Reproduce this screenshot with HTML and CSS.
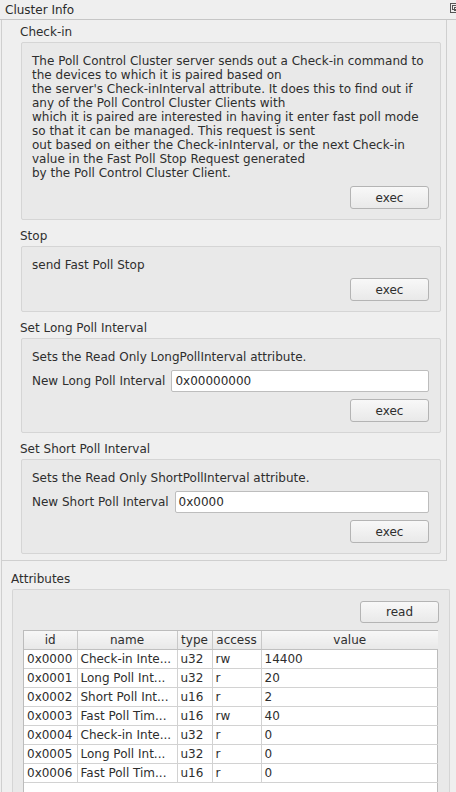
FILE: index.html
```
<!DOCTYPE html>
<html>
<head>
<meta charset="utf-8">
<link rel="stylesheet" href="styles.css">
</head>
<body>
<div class="dock">
  <div class="titlebar">
    <span class="title">Cluster Info</span>
    <svg class="float-icon" width="9" height="10" viewBox="0 0 9 10">
      <rect x="0.5" y="0.5" width="8" height="9" fill="none" stroke="#555" stroke-width="1"/>
      <rect x="2.5" y="2.5" width="4" height="4" fill="none" stroke="#555" stroke-width="1"/>
      <rect x="4.5" y="4.5" width="3" height="3" fill="none" stroke="#555" stroke-width="1"/>
    </svg>
  </div>
  <div class="content">
    <div class="scroll">
      <section class="group">
        <div class="group-label">Check-in</div>
        <div class="frame">
          <div class="desc">The Poll Control Cluster server sends out a Check-in command to<br>the devices to which it is paired based on<br>the server's Check-inInterval attribute. It does this to find out if<br>any of the Poll Control Cluster Clients with<br>which it is paired are interested in having it enter fast poll mode<br>so that it can be managed. This request is sent<br>out based on either the Check-inInterval, or the next Check-in<br>value in the Fast Poll Stop Request generated<br>by the Poll Control Cluster Client.</div>
          <div class="btn-row"><button class="btn">exec</button></div>
        </div>
      </section>
      <section class="group">
        <div class="group-label">Stop</div>
        <div class="frame">
          <div class="desc">send Fast Poll Stop</div>
          <div class="btn-row"><button class="btn">exec</button></div>
        </div>
      </section>
      <section class="group">
        <div class="group-label">Set Long Poll Interval</div>
        <div class="frame">
          <div class="desc">Sets the Read Only LongPollInterval attribute.</div>
          <div class="field-row">
            <span class="field-label">New Long Poll Interval</span>
            <div class="input">0x00000000</div>
          </div>
          <div class="btn-row"><button class="btn">exec</button></div>
        </div>
      </section>
      <section class="group">
        <div class="group-label">Set Short Poll Interval</div>
        <div class="frame">
          <div class="desc">Sets the Read Only ShortPollInterval attribute.</div>
          <div class="field-row">
            <span class="field-label">New Short Poll Interval</span>
            <div class="input">0x0000</div>
          </div>
          <div class="btn-row"><button class="btn">exec</button></div>
        </div>
      </section>
    </div>
    <section class="attributes">
      <div class="attr-label">Attributes</div>
      <div class="attr-frame">
        <div class="btn-row"><button class="btn">read</button></div>
        <div class="table-wrap">
          <table class="attr-table">
            <colgroup>
              <col class="c-id"><col class="c-name"><col class="c-type"><col class="c-access"><col class="c-value">
            </colgroup>
            <thead>
              <tr><th>id</th><th>name</th><th>type</th><th>access</th><th>value</th></tr>
            </thead>
            <tbody>
              <tr><td>0x0000</td><td>Check-in Inte...</td><td>u32</td><td>rw</td><td>14400</td></tr>
              <tr><td>0x0001</td><td>Long Poll Int...</td><td>u32</td><td>r</td><td>20</td></tr>
              <tr><td>0x0002</td><td>Short Poll Int...</td><td>u16</td><td>r</td><td>2</td></tr>
              <tr><td>0x0003</td><td>Fast Poll Tim...</td><td>u16</td><td>rw</td><td>40</td></tr>
              <tr><td>0x0004</td><td>Check-in Inte...</td><td>u32</td><td>r</td><td>0</td></tr>
              <tr><td>0x0005</td><td>Long Poll Int...</td><td>u32</td><td>r</td><td>0</td></tr>
              <tr><td>0x0006</td><td>Fast Poll Tim...</td><td>u16</td><td>r</td><td>0</td></tr>
            </tbody>
          </table>
        </div>
      </div>
    </section>
  </div>
</div>
</body>
</html>
```
FILE: styles.css
```
html, body {
  margin: 0;
  padding: 0;
  background: #efefef;
  overflow: hidden;
}
body {
  width: 456px;
  height: 792px;
  font-family: "DejaVu Sans", sans-serif;
  font-size: 12px;
  color: #2e2e2e;
}
.dock {
  display: flex;
  flex-direction: column;
  height: 792px;
}
.titlebar {
  border-bottom: 1px solid #c6c6c6;
  display: flex;
  align-items: flex-start;
  justify-content: space-between;
  box-sizing: border-box;
  height: 20px;
}
.title {
  margin-left: 5px;
  line-height: 20px;
  color: #2a2a2a;
}
.float-icon {
  margin-top: 3px;
  margin-right: -3px;
}
.content {
  flex: 1;
  border-left: 1px solid #cfcfcf;
  margin-left: 1px;
  display: flex;
  flex-direction: column;
  overflow: hidden;
}
.scroll {
  width: 445px;
  border-right: 1px solid #cfcfcf;
  border-bottom: 1px solid #cfcfcf;
  padding: 0 5px 6px 18px;
  box-sizing: border-box;
  display: flex;
  flex-direction: column;
  gap: 4px;
}
.group-label {
  height: 22px;
  line-height: 24px;
}
.frame {
  margin-left: 1px;
  background: #e9e9e9;
  border: 1px solid #d5d5d5;
  border-radius: 2px;
  padding: 10px 11px 10px 10px;
  display: flex;
  flex-direction: column;
  gap: 7px;
}
.desc {
  line-height: 14px;
  padding-top: 1px;
  margin-bottom: -1px;
}
.btn-row {
  display: flex;
  justify-content: flex-end;
}
.btn {
  width: 79px;
  height: 23px;
  font-family: "DejaVu Sans", sans-serif;
  font-size: 12px;
  color: #2e2e2e;
  background: linear-gradient(#f8f8f8, #e9e9e9);
  border: 1px solid #b4b4b4;
  border-radius: 3px;
  padding: 0;
  margin: 0;
}
.field-row {
  display: flex;
  align-items: center;
  gap: 6px;
}
.input {
  flex: 1;
  height: 22px;
  box-sizing: border-box;
  background: #ffffff;
  border: 1px solid #bdbdbd;
  border-radius: 2px;
  padding-left: 3px;
  line-height: 20px;
  color: #2a2a2a;
}
.attributes {
  padding-left: 9px;
  padding-top: 6px;
  flex: 1;
  display: flex;
  flex-direction: column;
  min-height: 0;
}
.attr-label {
  height: 22px;
  line-height: 24px;
}
.attr-frame {
  margin-left: 1px;
  width: 438px;
  box-sizing: border-box;
  flex: 1;
  background: #e9e9e9;
  border: 1px solid #d5d5d5;
  border-bottom: none;
  border-radius: 2px 2px 0 0;
  padding: 11px 11px 0 10px;
  display: flex;
  flex-direction: column;
  gap: 7px;
}
.attr-frame .btn {
  height: 22px;
  margin-right: -1px;
}
.table-wrap {
  flex: 1;
  background: #ffffff;
  border: 1px solid #bcbcbc;
  border-bottom: none;
}
.attr-table {
  border-collapse: collapse;
  table-layout: fixed;
  width: 414px;
}
.c-id { width: 53px; }
.c-name { width: 100px; }
.c-type { width: 35px; }
.c-access { width: 49px; }
.c-value { width: 177px; }
.attr-table th {
  height: 17px;
  font-weight: normal;
  background: linear-gradient(#f7f7f7, #e8e8e8);
  border-right: 1px solid #c8c8c8;
  border-bottom: 1px solid #c0c0c0;
  padding: 1px 0 0 0;
  text-align: center;
  line-height: 17px;
  white-space: nowrap;
  overflow: hidden;
}
.attr-table th:last-child,
.attr-table td:last-child {
  border-right: none;
}
.attr-table td {
  height: 17px;
  padding: 1px 0 0 3px;
  border-right: 1px solid #d2d2d2;
  border-bottom: 1px solid #d2d2d2;
  line-height: 17px;
  white-space: nowrap;
  overflow: hidden;
}
```
